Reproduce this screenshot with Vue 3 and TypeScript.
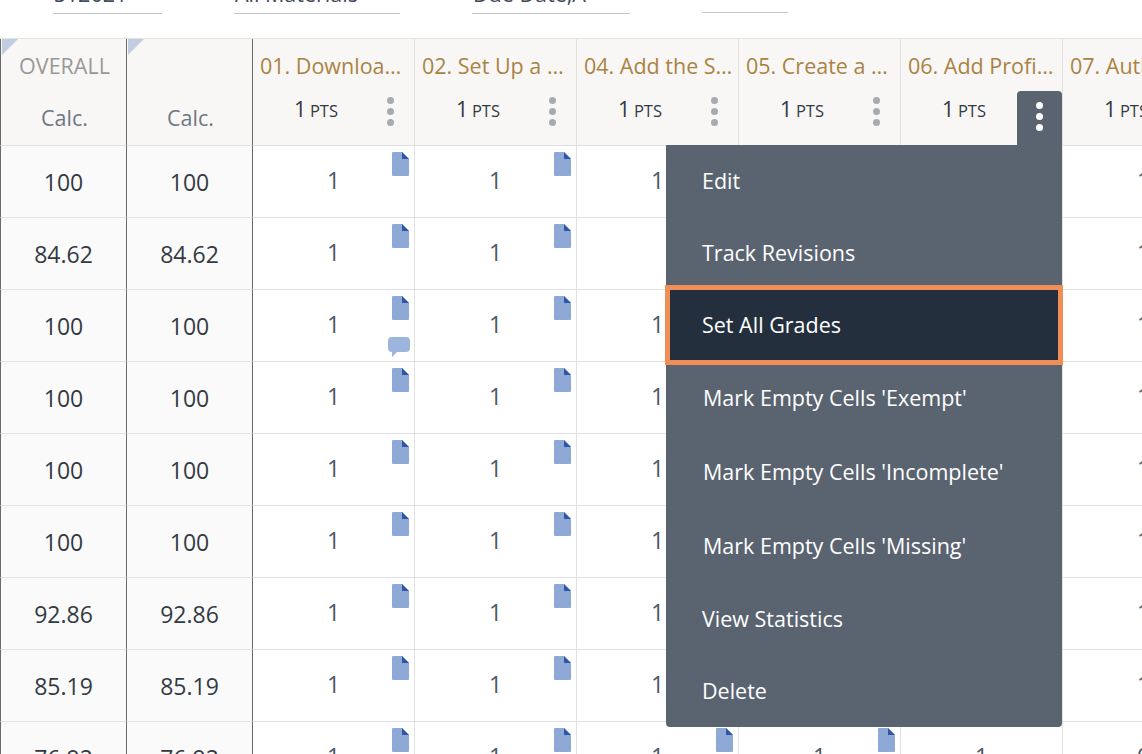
<script setup lang="ts">
interface Row {
  overall: string
  calc: string
  grades: (string | null)[]
  notes: boolean[]
  comment?: boolean
}

const filters = [
  { label: 'S12021', width: 109 },
  { label: 'All Materials', width: 166 },
  { label: 'Due Date,A', width: 158 },
  { label: '', width: 86 },
]

const assignments = [
  '01. Download the Syllabus',
  '02. Set Up a Profile',
  '04. Add the Student',
  '05. Create a Group',
  '06. Add Profile Photo',
  '07. Authorize Access',
]

const menuItems = [
  { label: 'Edit' },
  { label: 'Track Revisions' },
  { label: 'Set All Grades', active: true },
  { label: "Mark Empty Cells 'Exempt'", tall: true },
  { label: "Mark Empty Cells 'Incomplete'", tall: true },
  { label: "Mark Empty Cells 'Missing'", tall: true },
  { label: 'View Statistics' },
  { label: 'Delete' },
]

const firstTwo = [true, true, false, false, false, false]
const allOnes = ['1', '1', '1', '1', '1', '1']

const rows: Row[] = [
  { overall: '100', calc: '100', grades: allOnes, notes: firstTwo },
  { overall: '84.62', calc: '84.62', grades: ['1', '1', null, '1', '1', '1'], notes: firstTwo },
  { overall: '100', calc: '100', grades: allOnes, notes: firstTwo, comment: true },
  { overall: '100', calc: '100', grades: allOnes, notes: firstTwo },
  { overall: '100', calc: '100', grades: allOnes, notes: firstTwo },
  { overall: '100', calc: '100', grades: allOnes, notes: firstTwo },
  { overall: '92.86', calc: '92.86', grades: allOnes, notes: firstTwo },
  { overall: '85.19', calc: '85.19', grades: allOnes, notes: firstTwo },
  {
    overall: '76.92',
    calc: '76.92',
    grades: ['1', '1', '1', '1', '1', '0'],
    notes: [true, true, true, true, false, false],
  },
]
</script>

<template>
  <div class="page">
    <div class="filters">
      <div v-for="f in filters" :key="f.width" class="filter" :style="{ width: f.width + 'px' }">
        <span>{{ f.label }}</span>
      </div>
    </div>

    <div class="board">
      <div class="grid">
        <div class="head fixed">
          <span class="corner"></span>
          <div class="head-title">OVERALL</div>
          <div class="head-calc">Calc.</div>
        </div>
        <div class="head fixed">
          <span class="corner"></span>
          <div class="head-title"></div>
          <div class="head-calc">Calc.</div>
        </div>
        <div v-for="(name, i) in assignments" :key="name" class="head" :class="{ first: i === 0 }">
          <div class="name">{{ name }}</div>
          <div class="points-row">
            <span class="points">1 <small>PTS</small></span>
            <span class="kebab"><i></i><i></i><i></i></span>
          </div>
        </div>

        <template v-for="(row, r) in rows" :key="r">
          <div class="cell fixed">{{ row.overall }}</div>
          <div class="cell fixed">{{ row.calc }}</div>
          <div
            v-for="(grade, c) in row.grades"
            :key="c"
            class="cell grade"
            :class="{ first: c === 0 }"
          >
            <span class="grade-value">{{ grade }}</span>
            <svg v-if="row.notes[c]" class="note" viewBox="0 0 17 24" aria-hidden="true">
              <path d="M0 1a1 1 0 0 1 1-1h9l7 7v16a1 1 0 0 1-1 1H1a1 1 0 0 1-1-1z" fill="#8fa9d6" />
              <path d="M10 0l7 7h-7z" fill="#2f55a4" />
            </svg>
            <svg v-if="row.comment && c === 0" class="comment" viewBox="0 0 22 20" aria-hidden="true">
              <path
                d="M4 0h14a4 4 0 0 1 4 4v7a4 4 0 0 1-4 4H9l-5 5v-5a4 4 0 0 1-4-4V4a4 4 0 0 1 4-4z"
                fill="#9db5dc"
              />
            </svg>
          </div>
        </template>
      </div>

      <button class="trigger" type="button"><i></i><i></i><i></i></button>
      <ul class="menu">
        <li
          v-for="item in menuItems"
          :key="item.label"
          :class="{ active: item.active, tall: item.tall }"
        >
          {{ item.label }}
        </li>
      </ul>
    </div>
  </div>
</template>

<style scoped>
.page {
  width: 1142px;
  height: 754px;
  overflow: hidden;
  background: #ffffff;
  font-family: "Open Sans", "Liberation Sans", sans-serif;
  font-size: 21.5px;
  color: #333a42;
}

.filters {
  display: flex;
  align-items: flex-start;
  gap: 72px;
  height: 38px;
  padding-left: 53px;
  box-sizing: border-box;
}

.filter {
  display: flex;
  align-items: flex-end;
  height: 14px;
  padding: 0 0 9px 1px;
  box-sizing: border-box;
  border-bottom: 1px solid #c6c6c6;
  color: #3f4a5a;
  line-height: 20px;
  white-space: nowrap;
}

.filter:last-child {
  height: 13px;
}

.board {
  position: relative;
}

.grid {
  display: grid;
  grid-template-columns: 126px 126px repeat(6, 162px);
  width: 1224px;
  border-top: 1px solid #e6e4e1;
}

.head {
  position: relative;
  height: 107px;
  padding: 13px 4px 0 7px;
  box-sizing: border-box;
  background: #f9f7f6;
  border-left: 1px solid #e2e0dc;
  border-bottom: 1px solid #e2e0dc;
}

.head.fixed {
  padding: 13px 0 0 2px;
  text-align: center;
}

.fixed,
.first {
  border-left-color: #666a6e;
}

.corner {
  position: absolute;
  top: 0;
  left: 1px;
  width: 0;
  height: 0;
  border-top: 16px solid #c1cde0;
  border-right: 16px solid transparent;
}

.head-title {
  height: 28px;
  line-height: 28px;
  color: #999896;
}

.head-calc {
  margin-top: 24px;
  line-height: 28px;
  color: #6d7682;
}

.name {
  height: 28px;
  line-height: 28px;
  color: #a98343;
  white-space: nowrap;
  overflow: hidden;
  text-overflow: ellipsis;
}

.points-row {
  display: flex;
  justify-content: space-between;
  margin-top: 16px;
  padding: 0 16px 0 34px;
}

.points {
  line-height: 26px;
}

.points small {
  margin-left: -2px;
  font-size: 16.5px;
}

.kebab {
  display: flex;
  flex-direction: column;
  gap: 4px;
  margin-top: 1px;
}

.kebab i,
.trigger i {
  display: block;
  width: 7px;
  height: 7px;
  border-radius: 50%;
  background: #a6abb0;
}

.cell {
  position: relative;
  display: flex;
  align-items: center;
  justify-content: center;
  height: 72px;
  box-sizing: border-box;
  border-left: 1px solid #e2e2e2;
  border-bottom: 1px solid #e2e2e2;
  font-size: 23px;
}

.cell.fixed {
  background: #fafafa;
  border-left-color: #666a6e;
}

.cell.first {
  border-left-color: #666a6e;
}

.grade-value {
  margin-top: -3px;
  color: #4d5663;
}

.note {
  position: absolute;
  top: 6px;
  right: 5px;
  width: 17px;
  height: 24px;
}

.comment {
  position: absolute;
  top: 47px;
  right: 4px;
  width: 22px;
  height: 20px;
}

.trigger {
  position: absolute;
  top: 53px;
  left: 1017px;
  display: flex;
  flex-direction: column;
  align-items: center;
  gap: 4px;
  width: 45px;
  height: 55px;
  padding: 11px 0 0;
  box-sizing: border-box;
  border: 0;
  border-radius: 4px 4px 0 0;
  background: #5a6370;
}

.trigger i {
  background: #ffffff;
}

.menu {
  position: absolute;
  top: 107px;
  left: 666px;
  width: 396px;
  margin: 0;
  padding: 0;
  list-style: none;
  border-radius: 0 0 4px 4px;
  background: #5a6370;
  color: #ffffff;
}

.menu li {
  display: flex;
  align-items: center;
  height: 72px;
  padding: 0 0 2px 36px;
  box-sizing: border-box;
}

.menu li.tall {
  height: 74px;
  padding-left: 37px;
}

.menu li.active {
  position: relative;
  height: 80px;
  margin: -4px -1px;
  padding-left: 32px;
  border: 5px solid #ef8f55;
  background: #232f3c;
}
</style>
